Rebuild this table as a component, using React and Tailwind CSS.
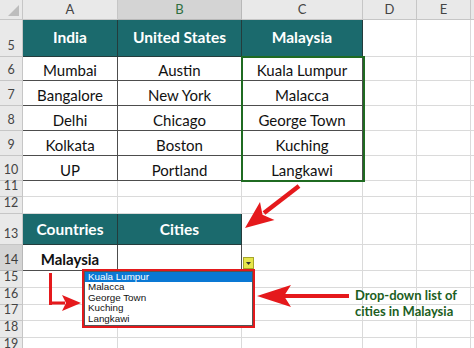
import React from "react";

const rows = [
  { n: 5, cells: [{ t: "India", k: "head" }, { t: "United States", k: "head" }, { t: "Malaysia", k: "head" }] },
  { n: 6, cells: [{ t: "Mumbai", k: "body" }, { t: "Austin", k: "body" }, { t: "Kuala Lumpur", k: "body" }] },
  { n: 7, cells: [{ t: "Bangalore", k: "body" }, { t: "New York", k: "body" }, { t: "Malacca", k: "body" }] },
  { n: 8, cells: [{ t: "Delhi", k: "body" }, { t: "Chicago", k: "body" }, { t: "George Town", k: "body" }] },
  { n: 9, cells: [{ t: "Kolkata", k: "body" }, { t: "Boston", k: "body" }, { t: "Kuching", k: "body" }] },
  { n: 10, cells: [{ t: "UP", k: "body" }, { t: "Portland", k: "body" }, { t: "Langkawi", k: "body" }] },
  { n: 11, cells: [] },
  { n: 12, cells: [] },
  { n: 13, cells: [{ t: "Countries", k: "head2" }, { t: "Cities", k: "head2" }] },
  { n: 14, cells: [{ t: "Malaysia", k: "bold" }, { t: "", k: "body" }] },
  { n: 15, cells: [] },
  { n: 16, cells: [] },
  { n: 17, cells: [] },
  { n: 18, cells: [] },
  { n: 19, cells: [] },
];

const letters = ["A", "B", "C", "D", "E", ""];

const cellClass = {
  head: "bg-[#1b6a6d] text-white font-bold text-[15.5px] flex items-center justify-center border-r border-b border-[#243c3c]",
  head2: "bg-[#1b6a6d] text-white font-bold text-[15.5px] flex items-center justify-center pt-[2px] border-r border-b border-[#243c3c]",
  body: "bg-white text-[#111] text-[15px] leading-none flex items-end justify-center pb-[2px] border-r border-b border-[#4d4d4d]",
  bold: "bg-white text-[#111] font-bold text-[15px] leading-none flex items-end justify-center pb-[3px] border-r border-b border-[#4d4d4d]",
  empty: "bg-white border-r border-b border-[#dadada]",
};

const items = ["Kuala Lumpur", "Malacca", "George Town", "Kuching", "Langkawi"];

function Arrows() {
  return (
    <svg className="absolute left-0 top-0 pointer-events-none" width="474" height="348" viewBox="0 0 474 348">
      <g fill="#e5191c" stroke="none">
        {/* diagonal arrow to B13 */}
        <line x1="299" y1="186" x2="264" y2="213" stroke="#e5191c" strokeWidth="4.5" />
        <polygon points="245,228 260,202 262.5,214.7 274.5,220" />
        {/* L arrow below Malaysia */}
        <rect x="49" y="273" width="3" height="32" />
        <rect x="49" y="301.5" width="16" height="3" />
        <polygon points="81,303 62,295 66,303 62,311" />
        {/* arrow to dropdown list */}
        <rect x="283" y="294" width="66" height="4" />
        <polygon points="257,296 291,285 284,296 291,307" />
      </g>
    </svg>
  );
}

export default function App() {
  return (
    <div className="relative w-[474px] h-[348px] overflow-hidden bg-white" style={{ fontFamily: "Lato, 'Liberation Sans', sans-serif" }}>
      <div className="grid grid-cols-[23px_95px_124px_121px_54px_54px_30px] grid-rows-[20px_37px_24px_25px_25px_25px_25px_16px_17px_31px_26px_17px_17px_16px_17px_17px]">
        <div className="bg-[#e9e9e9] border-r border-b border-[#c6c6c6] flex items-end justify-end pr-[3px] pb-[3px]">
          <svg width="11" height="11" viewBox="0 0 11 11">
            <polygon points="11,0 11,11 0,11" fill="#bdbdbd" />
          </svg>
        </div>
        {letters.map((l, i) => (
          <div
            key={"h" + i}
            className={
              i === 1
                ? "bg-[#d4d4d4] text-[#2f6f3f] text-[13px] flex items-center justify-center border-r border-b border-[#b8b8b8]"
                : "bg-[#e9e9e9] text-[#444] text-[13px] flex items-center justify-center border-r border-b border-[#c6c6c6]"
            }
          >
            {l}
          </div>
        ))}
        {rows.map((r) => (
          <React.Fragment key={r.n}>
            <div
              className={
                r.n === 14
                  ? "bg-[#d4d4d4] text-[#3a3a3a] text-[12.5px] leading-none flex items-end justify-center pb-[4px] border-r border-b border-[#b8b8b8]"
                  : "bg-[#e9e9e9] text-[#444] text-[12.5px] leading-none flex items-end justify-center pb-[4px] border-r border-b border-[#c6c6c6]"
              }
            >
              {r.n}
            </div>
            {letters.map((l, i) => {
              const c = r.cells[i];
              return (
                <div key={r.n + "-" + i} className={c ? cellClass[c.k] : cellClass.empty}>
                  {c ? c.t : null}
                </div>
              );
            })}
          </React.Fragment>
        ))}
      </div>

      {/* green outline around Malaysia cities */}
      <div className="absolute left-[241px] top-[56px] w-[124px] h-[126px] border-2 border-[#1f6b21]" />

      {/* dropdown button */}
      <div className="absolute left-[243px] top-[257px] w-[11px] h-[12px] bg-[#e6e64a] border border-[#a6a62a] flex items-center justify-center">
        <svg width="5" height="3" viewBox="0 0 5 3">
          <polygon points="0,0 5,0 2.5,3" fill="#333" />
        </svg>
      </div>

      {/* dropdown list */}
      <div className="absolute left-[82px] top-[269px] w-[173px] h-[58.5px] border-[2.5px] border-[#e3191c] bg-white">
        <div className="h-full border border-[#555] flex flex-col" style={{ fontFamily: "'Liberation Sans', Arial, sans-serif" }}>
          {items.map((it, i) => (
            <div
              key={it}
              className={
                i === 0
                  ? "h-[10.4px] leading-[10.4px] text-[9.8px] text-white bg-[#0a78d4] px-[3px]"
                  : "h-[10.4px] leading-[10.4px] text-[9.8px] text-[#111] px-[3px]"
              }
            >
              {it}
            </div>
          ))}
        </div>
      </div>

      <Arrows />

      {/* annotation */}
      <div className="absolute left-[355px] top-[287px] text-[#1c5e1e] font-bold text-[13px] leading-[16px]">
        <div>Drop-down list of</div>
        <div>cities in Malaysia</div>
      </div>
    </div>
  );
}
